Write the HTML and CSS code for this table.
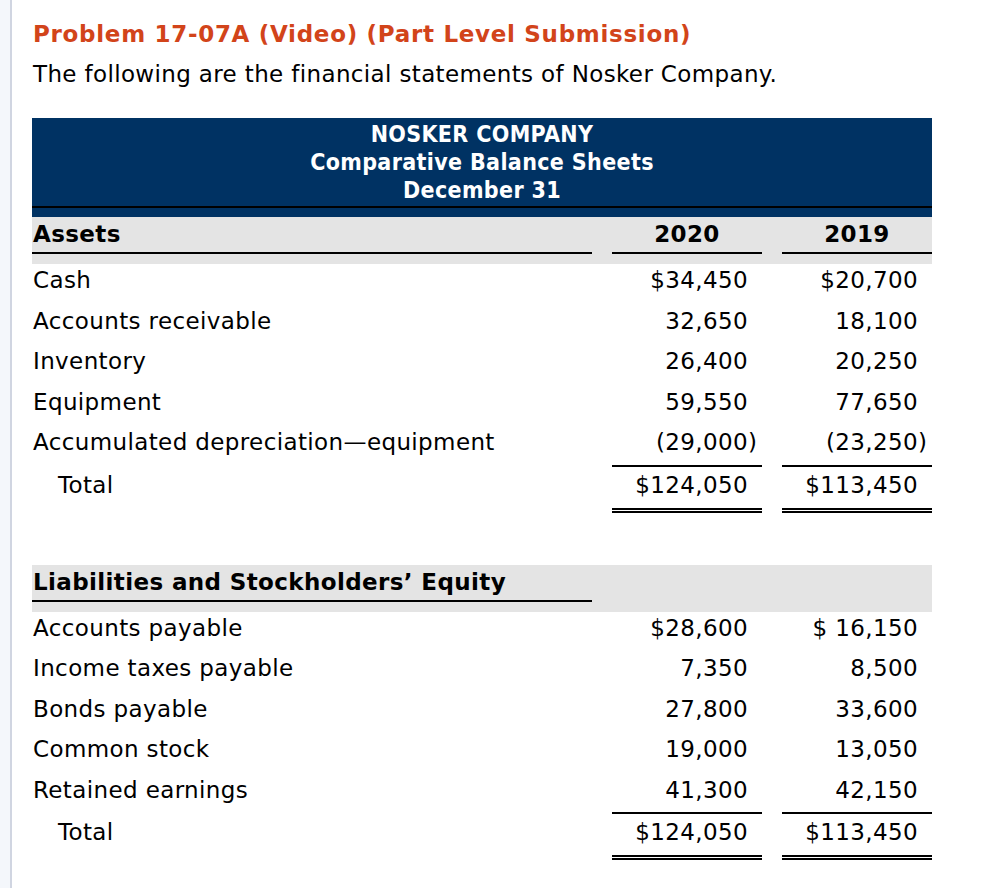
FILE: index.html
```html
<!DOCTYPE html>
<html lang="en">
<head>
<meta charset="utf-8">
<title>Problem 17-07A</title>
<link rel="stylesheet" href="styles.css">
</head>
<body>
<div class="page">
  <div class="rail"></div>
  <main class="content">
    <h1 class="title">Problem 17-07A (Video) (Part Level Submission)</h1>
    <p class="intro">The following are the financial statements of Nosker Company.</p>

    <section class="sheet">
      <header class="sheet-head">
        <div class="head-text">NOSKER COMPANY<br>Comparative Balance Sheets<br>December 31</div>
      </header>

      <div class="row head-row">
        <div class="cell label">Assets</div>
        <div class="cell year">2020</div>
        <div class="cell year">2019</div>
      </div>
      <div class="row">
        <div class="cell label">Cash</div>
        <div class="cell num">$34,450</div>
        <div class="cell num">$20,700</div>
      </div>
      <div class="row">
        <div class="cell label">Accounts receivable</div>
        <div class="cell num">32,650</div>
        <div class="cell num">18,100</div>
      </div>
      <div class="row">
        <div class="cell label">Inventory</div>
        <div class="cell num">26,400</div>
        <div class="cell num">20,250</div>
      </div>
      <div class="row">
        <div class="cell label">Equipment</div>
        <div class="cell num">59,550</div>
        <div class="cell num">77,650</div>
      </div>
      <div class="row">
        <div class="cell label">Accumulated depreciation—equipment</div>
        <div class="cell num sub">(29,000<span class="paren">)</span></div>
        <div class="cell num sub">(23,250<span class="paren">)</span></div>
      </div>
      <div class="row total-row">
        <div class="cell label total-label">Total</div>
        <div class="cell num dbl">$124,050</div>
        <div class="cell num dbl">$113,450</div>
      </div>

      <div class="row head-row liab">
        <div class="cell label">Liabilities and Stockholders’ Equity</div>
        <div class="cell blank"></div>
        <div class="cell blank"></div>
      </div>
      <div class="row">
        <div class="cell label">Accounts payable</div>
        <div class="cell num">$28,600</div>
        <div class="cell num">$ 16,150</div>
      </div>
      <div class="row">
        <div class="cell label">Income taxes payable</div>
        <div class="cell num">7,350</div>
        <div class="cell num">8,500</div>
      </div>
      <div class="row">
        <div class="cell label">Bonds payable</div>
        <div class="cell num">27,800</div>
        <div class="cell num">33,600</div>
      </div>
      <div class="row">
        <div class="cell label">Common stock</div>
        <div class="cell num">19,000</div>
        <div class="cell num">13,050</div>
      </div>
      <div class="row">
        <div class="cell label">Retained earnings</div>
        <div class="cell num sub">41,300</div>
        <div class="cell num sub">42,150</div>
      </div>
      <div class="row total-row">
        <div class="cell label total-label">Total</div>
        <div class="cell num dbl">$124,050</div>
        <div class="cell num dbl">$113,450</div>
      </div>
    </section>
  </main>
</div>
</body>
</html>
```

FILE: styles.css
```css
html, body {
  margin: 0;
  padding: 0;
  background: #ffffff;
}

body {
  font-family: "DejaVu Sans", Verdana, sans-serif;
  color: #000000;
}

.page {
  display: flex;
  min-height: 888px;
}

.rail {
  width: 10px;
  flex: 0 0 10px;
  background: #f4f7fb;
  border-right: 2px solid #d0d5e1;
}

.content {
  padding: 20px 0 0 20px;
}

.title {
  margin: 0;
  font-size: 23px;
  line-height: 28px;
  font-weight: bold;
  letter-spacing: 0.7px;
  color: #d2441a;
  padding-left: 1px;
}

.intro {
  margin: 12px 0 0;
  font-size: 23px;
  line-height: 28px;
  letter-spacing: 0.36px;
  padding-left: 1px;
}

.sheet {
  margin-top: 30px;
  width: 900px;
}

.sheet-head {
  background: #003263;
  padding: 2px 0 9px;
}

.head-text {
  font-family: "DejaVu Sans Condensed", "DejaVu Sans", sans-serif;
  font-weight: bold;
  font-size: 23px;
  line-height: 28px;
  letter-spacing: 0.35px;
  color: #ffffff;
  text-align: center;
  padding-bottom: 2px;
  border-bottom: 2px solid #000000;
}

.row {
  display: grid;
  grid-template-columns: 560px 150px 150px;
  column-gap: 20px;
  font-size: 23px;
  letter-spacing: 0.38px;
}

.cell {
  line-height: 32px;
  padding-bottom: 8.5px;
  white-space: nowrap;
}

.label {
  padding-left: 1px;
}

.num {
  text-align: right;
  padding-right: 14px;
}

.paren {
  display: inline-block;
  width: 0;
}

.head-row {
  background: #e4e4e4;
  padding-bottom: 10px;
}

.head-row .cell {
  font-weight: bold;
  line-height: 35px;
  padding-bottom: 0;
  border-bottom: 2px solid #000000;
}

.head-row .year {
  text-align: center;
}

.head-row .blank {
  border-bottom: none;
}

.liab {
  margin-top: 52px;
}

.sub {
  border-bottom: 2px solid #000000;
  padding-bottom: 6.5px;
}

.total-row .cell {
  line-height: 36px;
  padding-bottom: 5px;
}

.total-row .dbl {
  border-bottom: 5px double #000000;
}

.total-label {
  padding-left: 26px;
}
```
